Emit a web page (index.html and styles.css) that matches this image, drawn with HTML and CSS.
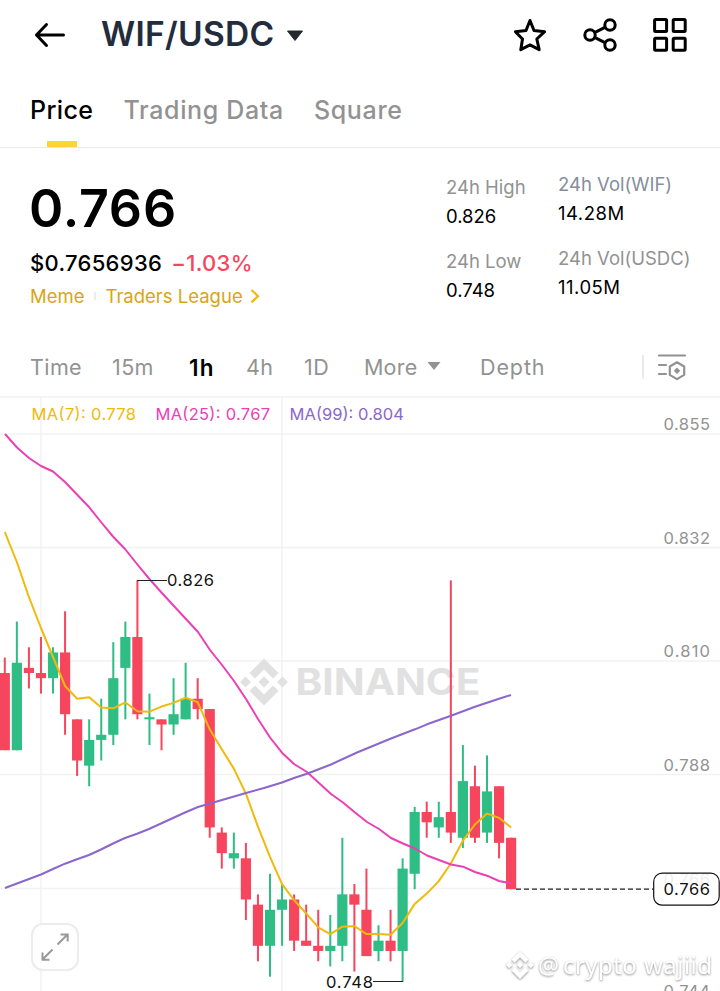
FILE: index.html
```html
<!DOCTYPE html>
<html lang="en">
<head>
    <meta charset="UTF-8">
    <meta name="viewport" content="width=device-width, initial-scale=1.0">
    <title>WIF/USDC</title>
    <link rel="stylesheet" href="styles.css">
</head>
<body>

    <header class="header">
        <svg class="back" width="34" height="28" viewBox="0 0 34 28"><path d="M14.500 3.500 4.500 14 14.500 24.500M4.500 14H31.500" /></svg>
        <h1 class="pair">WIF/USDC</h1>
        <svg class="caret" width="18" height="12" viewBox="0 0 18 12"><path d="M1.500 1h15L9 10.500z" /></svg>
        <div class="actions">
            <svg width="36" height="36" viewBox="0 0 36 36"><path d="M18 3.500l4 10 10.600 1.200-7.800 7.300 2.400 10.700L18 27.900l-9.200 4.800 1.700-10.700L3.400 14.700l10.600-1.200z" /></svg>
            <svg width="36" height="36" viewBox="0 0 36 36"><circle cx="8" cy="18" r="5.200" /><circle cx="28" cy="8" r="5.200" /><circle cx="28" cy="28" r="5.200" /><path d="M12.600 15.600 23.400 10.200M12.600 20.400 23.400 25.800" /></svg>
            <svg width="36" height="36" viewBox="0 0 36 36"><rect x="2.600" y="2.600" width="12" height="12" rx="1" /><rect x="21.200" y="2.600" width="12" height="12" rx="1" /><rect x="2.600" y="21.200" width="12" height="12" rx="1" /><rect x="21.200" y="21.200" width="12" height="12" rx="1" /></svg>
        </div>
    </header>

    <nav class="tabs">
        <a class="tab tab-active">Price</a>
        <a class="tab">Trading Data</a>
        <a class="tab">Square</a>
    </nav>

    <section class="summary">
        <div class="price-box">
            <div class="price">0.766</div>
            <div class="fiat">$0.7656936 <span class="change">−1.03%</span></div>
            <div class="tags">
                <span>Meme</span>
                <span class="tag-line"></span>
                <span class="league">Traders League</span>
                <svg width="10" height="16" viewBox="0 0 10 16"><path d="M1.500 2 8 8.200 1.500 14.400" /></svg>
            </div>
        </div>
        <div class="stats stats-range">
            <div class="label">24h High</div>
            <div class="value">0.826</div>
            <div class="label">24h Low</div>
            <div class="value">0.748</div>
        </div>
        <div class="stats stats-volume">
            <div class="label label-blue">24h Vol(WIF)</div>
            <div class="value">14.28M</div>
            <div class="label">24h Vol(USDC)</div>
            <div class="value">11.05M</div>
        </div>
    </section>

    <nav class="intervals">
        <span class="time">Time</span>
        <span class="m15">15m</span>
        <span class="h1 active">1h</span>
        <span class="h4">4h</span>
        <span class="d1">1D</span>
        <span class="more">More</span>
        <svg class="more-caret" width="16" height="10" viewBox="0 0 16 10"><path d="M1.500 1h13L8 9z" /></svg>
        <span class="depth">Depth</span>
        <span class="divider"></span>
        <svg class="settings" width="32" height="30" viewBox="0 0 32 30">
            <path d="M4 3.500H30M4 13H11M4 22H11M22 10.300l7.200 4.200v8.400L22 27.100l-7.200-4.200v-8.400z" />
            <path class="diamond" d="M22 15.500l3.200 3.200-3.200 3.200-3.200-3.200z" />
        </svg>
    </nav>

    <main class="chart">
        <!-- vertical units are screen pixels, the chart starts at 396 -->
        <svg class="plot" width="720" height="595" viewBox="0 396 720 595">
            <path class="grid" d="M0 397H720M0 434H720M0 547.500H720M0 661H720M0 774.500H720M0 888.500H720M41 397V991M282 397V991" />

            <g class="watermark">
                <path d="M264 658.500l14.500 14.500-5.500 5.500-9-9-9 9-5.500-5.500zM264 705.500l-14.500-14.500 5.500-5.500 9 9 9-9 5.500 5.500zM264 676.500l5.500 5.500-5.500 5.500-5.500-5.500zM245.500 676.500l5.500 5.500-5.500 5.500-5.500-5.500zM282.500 676.500l5.500 5.500-5.500 5.500-5.500-5.500z" />
                <text x="295.500" y="695.300" textLength="185" lengthAdjust="spacingAndGlyphs">BINANCE</text>
            </g>

            <g id="candles"></g>
            <polyline id="ma7" class="ma ma7" />
            <polyline class="ma ma25" points="5,434 17,447.500 29,458 41,466 53,471.500 65,482 77,494.500 89,507 101,522 113,536.500 125,549 137,564 149,578.500 161,592 173,605 185,618 198,632 210,650 222,665 234,681 246,699 258,719 270,737.500 282,752.700 294,764 307,772 319,783 331,794 343,802.500 355,812.500 367,822 379,829 391,838 403,843.500 415,848.500 427,855.500 439,860 451,864.500 463,866.700 475,872 487,875.700 499,881 511,883.300" />
            <polyline class="ma ma99" points="5,888 17,883.500 29,879 41,874.500 53,869 65,863.700 77,859.300 89,855 101,849.500 113,843.500 125,838 137,833.700 149,829 161,823.500 173,818 185,812.500 198,807 210,803.500 222,800 246,793 264,788 282,782.500 294,778 307,773.700 331,764.500 357,752.500 391,738.500 415,729.300 427,724.300 451,715.700 475,706.700 499,698.700 511,695" />

            <path class="note-line" d="M137 580.500H167M373 981.500H403" />
            <text class="note" x="167" y="586" textLength="47">0.826</text>
            <text class="note" x="326" y="988" textLength="47">0.748</text>

            <text class="legend gold" x="31.500" y="420" textLength="104.500">MA(7): 0.778</text>
            <text class="legend pink" x="155.500" y="420" textLength="114.500">MA(25): 0.767</text>
            <text class="legend purple" x="289.500" y="420" textLength="114.500">MA(99): 0.804</text>

            <g class="axis">
                <text x="663.500" y="430" textLength="46.500">0.855</text>
                <text x="663.500" y="544" textLength="46.500">0.832</text>
                <text x="663.500" y="657" textLength="46.500">0.810</text>
                <text x="663.500" y="771" textLength="46.500">0.788</text>
                <text x="663.500" y="884.500" textLength="46.500">0.766</text>
                <text x="663.500" y="997" textLength="46.500">0.744</text>
            </g>

            <path class="last-line" d="M516 889.200H653" />
            <rect class="last-box" x="653.700" y="873.200" width="65.500" height="32" rx="8.500" />
            <text class="note" x="663.500" y="895" textLength="46.500">0.766</text>

            <rect class="expand-box" x="32" y="924" width="46" height="46" rx="11" />
            <path class="expand" d="M57.500 944.500 67.500 934.500M60.500 934.500h7.200v7M52.500 949.500 42.500 959.500M42.500 952.500v7.200h7" />

            <g class="credit">
                <path d="M520 951l8.500 8.500-3.200 3.200-5.300-5.300-5.300 5.300-3.200-3.200zM520 979l-8.500-8.500 3.200-3.200 5.300 5.300 5.300-5.300 3.200 3.200zM520 961.800l3.200 3.200-3.200 3.200-3.200-3.200zM509.200 961.800l3.200 3.200-3.200 3.200-3.200-3.200zM530.800 961.800l3.200 3.200-3.200 3.200-3.200-3.200z" />
                <text x="538" y="974" textLength="21" lengthAdjust="spacingAndGlyphs">@</text>
                <text x="563" y="974" textLength="149">crypto wajiid</text>
            </g>
        </svg>
    </main>

    <script>
        // direction, high, body top, body bottom, low (in 0.001 USDC)
        const candles = [
            ["d", 811, 808, 793, 793], ["u", 818, 810, 793, 793], ["d", 813, 809, 808, 805],
            ["d", 815, 808, 807, 804], ["u", 813, 812, 807, 804], ["d", 820, 812, 800, 796],
            ["d", 799, 799, 791, 788], ["u", 799, 795, 790, 786], ["u", 803, 796, 795, 791],
            ["u", 814, 807, 796, 794], ["u", 818, 815, 809, 799], ["d", 826, 815, 800, 799],
            ["u", 804, 799.4, 799, 794], ["d", 799, 799, 798, 793], ["u", 807, 800, 798, 796],
            ["u", 810, 803, 799, 799], ["d", 807, 803, 801, 799], ["d", 801, 801, 778, 776],
            ["d", 778, 777, 773, 770], ["u", 777, 773, 772, 770], ["d", 775, 772, 764, 760],
            ["d", 765, 763, 755, 752], ["u", 769, 762, 755, 749], ["u", 767, 764, 762, 755],
            ["d", 765, 764, 756, 754], ["d", 763, 756, 755, 755], ["d", 762, 755, 754, 752],
            ["u", 761, 755, 754, 751], ["u", 776, 765, 755, 752], ["d", 767, 765, 763, 750],
            ["d", 770, 762, 753, 753], ["u", 759, 756, 754, 752], ["d", 762, 756, 754, 752],
            ["u", 772, 770, 754, 748], ["u", 782, 781, 769, 766], ["d", 783, 781, 779, 776],
            ["u", 783, 780, 778, 776], ["d", 826, 781, 777, 775], ["u", 794, 787, 776, 774],
            ["d", 790, 786, 776, 775], ["u", 792, 785, 777, 775], ["d", 786, 786, 775, 772],
            ["d", 776, 776, 766, 766]
        ];
        const svgNS = "http://www.w3.org/2000/svg";
        const group = document.getElementById("candles");

        function xOf(i) {
            return 4.8 + i * 12.055;
        }

        function yOf(price) {
            return 889.2 - (price - 766) * 5.147;
        }

        function addRect(name, x, width, high, low) {
            const rect = document.createElementNS(svgNS, "rect");
            rect.setAttribute("class", name);
            rect.setAttribute("x", x - width / 2);
            rect.setAttribute("y", yOf(high));
            rect.setAttribute("width", width);
            rect.setAttribute("height", Math.max(yOf(low) - yOf(high), 2));
            group.appendChild(rect);
        }

        candles.forEach(([dir, high, top, bottom, low], i) => {
            addRect(dir, xOf(i), 2, high, low);
            addRect(dir, xOf(i), 10.2, top, bottom);
        });

        // the first six averages need candles that are off screen
        const seed = [532, 562, 597, 628, 657, 686];
        const closes = candles.map(c => c[0] === "u" ? c[2] : c[3]);
        const points = closes.map((close, i) => {
            if (i < 6) return `${xOf(i)},${seed[i]}`;
            const sum = closes.slice(i - 6, i + 1).reduce((a, b) => a + b, 0);
            return `${xOf(i)},${yOf(sum / 7)}`;
        });
        document.getElementById("ma7").setAttribute("points", points.join(" "));
    </script>

</body>
</html>
```
FILE: styles.css
```css
* {
    box-sizing: border-box;
}
body {
    margin: 0;
    width: 720px;
    height: 991px;
    overflow: hidden;
    background: #fff;
    color: #000;
    font-family: Inter, "Liberation Sans", sans-serif;
}
svg {
    display: block;
    fill: none;
}
.header {
    display: flex;
    align-items: center;
    height: 70px;
    padding-left: 32px;
}
.back {
    stroke: #000;
    stroke-width: 3;
    stroke-linecap: round;
    stroke-linejoin: round;
}
.pair {
    margin: -2px 0 0 35px;
    width: 185px;
    font-size: 33.5px;
    font-weight: 600;
    line-height: 40px;
    letter-spacing: 0.3px;
    color: #232c3d;
    white-space: nowrap;
}
.caret {
    fill: #24282f;
    stroke: #24282f;
    stroke-linejoin: round;
    margin-top: 1px;
}
.actions {
    display: flex;
    gap: 34px;
    margin-left: auto;
    margin-right: 32px;
    stroke: #000;
    stroke-width: 3;
    stroke-linejoin: round;
}
.tabs {
    display: flex;
    gap: 30px;
    height: 78px;
    padding: 22px 30px 0;
    border-bottom: 1px solid #e9e9e9;
    font-size: 25px;
    font-weight: 500;
    line-height: 36px;
    letter-spacing: 0.65px;
    color: #929292;
}
.tab-active {
    color: #000;
    height: 55px;
    letter-spacing: 0.4px;
    background: linear-gradient(#fcd535, #fcd535) center bottom / 30px 6px no-repeat;
}
.summary {
    display: flex;
    height: 188px;
    padding: 0 0 0 30px;
}
.price-box {
    width: 416px;
    padding-top: 31px;
}
.price {
    margin-left: -1px;
    font-size: 52px;
    font-weight: 600;
    line-height: 60px;
    letter-spacing: 0.8px;
}
.fiat {
    margin-top: 10px;
    font-size: 22px;
    font-weight: 500;
    line-height: 28px;
    letter-spacing: 0.3px;
}
.change {
    margin-left: 3px;
    color: #f6465d;
}
.tags {
    display: flex;
    align-items: center;
    margin-top: 6px;
    font-size: 18.5px;
    line-height: 26px;
    color: #d9a514;
}
.tag-line {
    width: 2px;
    height: 8px;
    margin: 0 10px 0 9px;
    background: #eaecef;
}
.tags svg {
    margin-left: 7px;
    stroke: #f0b90b;
    stroke-width: 2.2;
}
.stats {
    padding-top: 26px;
    font-size: 18.5px;
    line-height: 26px;
}
.stats-range {
    width: 112px;
}
.stats-volume {
    padding-top: 23px;
}
.stats-volume .value {
    letter-spacing: 0.5px;
}
.label {
    color: #929292;
}
.label-blue {
    color: #848e9c;
}
.value {
    margin: 3px 0 19px;
}
.intervals {
    display: flex;
    align-items: center;
    height: 60px;
    padding: 2px 0 0 30px;
    font-size: 21.5px;
    letter-spacing: 0.4px;
    color: #929292;
}
.time {
    width: 82px;
}
.m15 {
    width: 77px;
}
.h1 {
    width: 57px;
}
.h4 {
    width: 58px;
}
.d1 {
    width: 60px;
}
.more {
    width: 62px;
    letter-spacing: 0.2px;
}
.active {
    color: #000;
    font-weight: 600;
    font-size: 22.5px;
    letter-spacing: 1.2px;
}
.more-caret {
    fill: #929292;
    margin-top: -3px;
}
.depth {
    margin-left: 38px;
    width: 162px;
    letter-spacing: 0.9px;
}
.divider {
    width: 2px;
    height: 24px;
    margin-right: 11px;
    background: #eaeaea;
}
.settings {
    stroke: #929292;
    stroke-width: 2.2;
    stroke-linecap: round;
    stroke-linejoin: round;
}
.diamond {
    fill: #929292;
    stroke: none;
}
.grid {
    stroke: #f2f2f2;
    stroke-width: 1.5;
}
.watermark {
    fill: #e1e1e1;
    font-size: 37px;
    font-weight: 700;
}
.u {
    fill: #2ebd85;
}
.d {
    fill: #f6465d;
}
.ma {
    stroke-width: 2;
    stroke-linejoin: round;
}
.ma7 {
    stroke: #f0b90b;
}
.ma25 {
    stroke: #eb40b5;
}
.ma99 {
    stroke: #8b66cc;
}
.note {
    fill: #111;
    font-size: 16.5px;
}
.note-line {
    stroke: #222;
    stroke-width: 1.2;
}
.legend {
    font-size: 16.5px;
}
.gold {
    fill: #f0b90b;
}
.pink {
    fill: #eb40b5;
}
.purple {
    fill: #8b66cc;
}
.axis {
    fill: #929292;
    font-size: 16.5px;
}
.last-line {
    stroke: #222;
    stroke-width: 1.3;
    stroke-dasharray: 5 3;
}
.last-box {
    fill: #fff;
    fill-opacity: 0.85;
    stroke: #111;
    stroke-width: 1.2;
}
.expand-box {
    fill: #fff;
    stroke: #ececec;
    stroke-width: 2;
}
.expand {
    stroke: #999;
    stroke-width: 2;
}
.credit {
    fill: #fff;
    font-family: "Noto Sans", sans-serif;
    font-size: 24px;
    filter: drop-shadow(0.5px 1px 0.8px rgba(0, 0, 0, 0.45));
}
```
